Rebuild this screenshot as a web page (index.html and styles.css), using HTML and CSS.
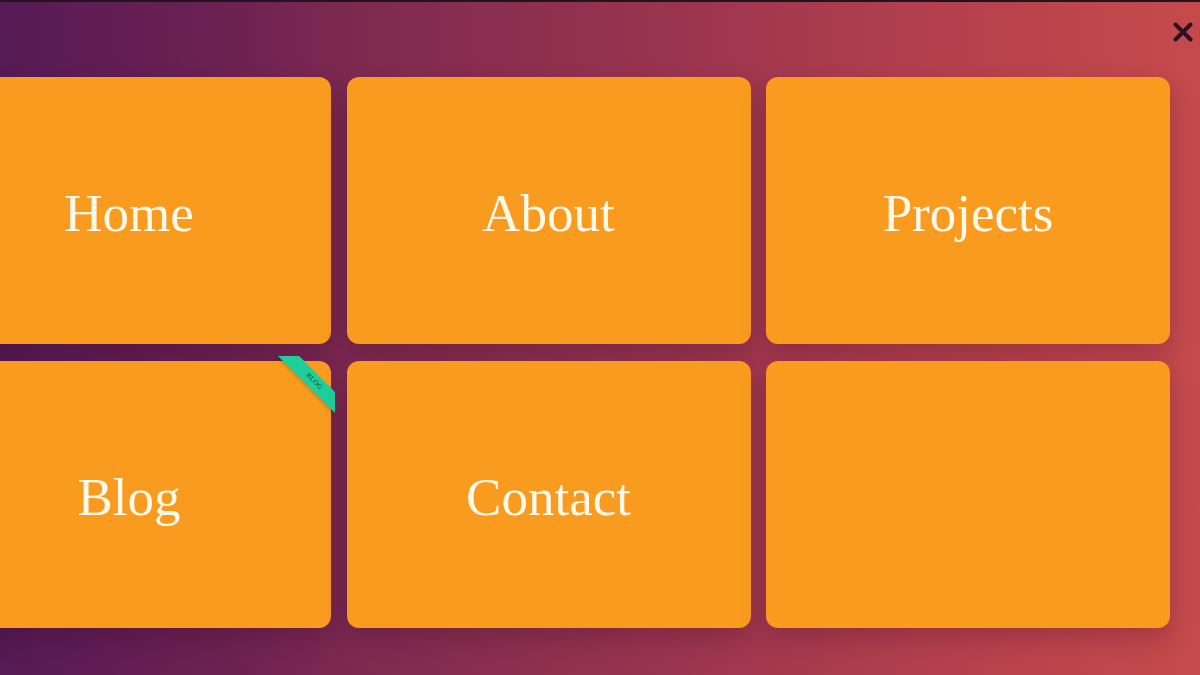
FILE: index.html
```html
<!DOCTYPE html>
<html lang="en">
<head>
<meta charset="utf-8">
<title>Menu</title>
<link rel="stylesheet" href="styles.css">
</head>
<body>
<div class="screen">
  <button class="close" aria-label="Close">
    <svg viewBox="0 0 20 20" width="20" height="20"><path d="M2.5 2.5 L17.5 17.5 M17.5 2.5 L2.5 17.5" stroke="#2a1424" stroke-width="4" stroke-linecap="round" fill="none"/></svg>
  </button>
  <nav class="grid">
    <a class="card" href="#">Home</a>
    <a class="card" href="#">About</a>
    <a class="card" href="#">Projects</a>
    <a class="card" href="#">Blog
      <span class="ribbon-wrap"><span class="ribbon">BLOG</span></span>
    </a>
    <a class="card" href="#">Contact</a>
    <a class="card" href="#"></a>
  </nav>
</div>
</body>
</html>
```
FILE: styles.css
```css
html, body {
  margin: 0;
  padding: 0;
  width: 1200px;
  height: 675px;
  overflow: hidden;
}
body {
  font-family: "Liberation Serif", "Times New Roman", serif;
}
.screen {
  position: relative;
  box-sizing: border-box;
  width: 1200px;
  height: 675px;
  border-top: 2px solid #24121f;
  background: linear-gradient(90deg, #561a55 0%, #6c2152 18%, #7e2a50 30%, #99344f 55%, #b4404d 78%, #c64a4b 100%);
  padding-top: 75px;
  overflow: hidden;
}
.close {
  position: absolute;
  top: 20px;
  right: 7px;
  width: 20px;
  height: 20px;
  padding: 0;
  border: 0;
  background: none;
  display: flex;
}
.grid {
  display: grid;
  grid-template-columns: repeat(3, 404px);
  grid-template-rows: 267px 267px;
  column-gap: 15.5px;
  row-gap: 17px;
  margin-left: -73px;
}
.card {
  position: relative;
  display: flex;
  align-items: center;
  justify-content: center;
  background: #f99b1f;
  border-radius: 12px;
  box-shadow: 0 10px 24px rgba(40, 0, 30, 0.22);
  color: #fff9ea;
  font-size: 53px;
  text-decoration: none;
  padding-top: 4px;
  box-sizing: border-box;
}
.ribbon-wrap {
  position: absolute;
  top: -5px;
  right: -4px;
  width: 70px;
  height: 70px;
  overflow: hidden;
}
.ribbon {
  position: absolute;
  left: -1px;
  top: 18px;
  width: 100px;
  height: 15px;
  line-height: 15px;
  background: #1fcf9b;
  transform: rotate(45deg);
  color: #2a2a25;
  font-size: 7px;
  text-align: center;
  letter-spacing: 0.3px;
  box-shadow: 0 2px 3px rgba(0, 0, 0, 0.15);
}
```
